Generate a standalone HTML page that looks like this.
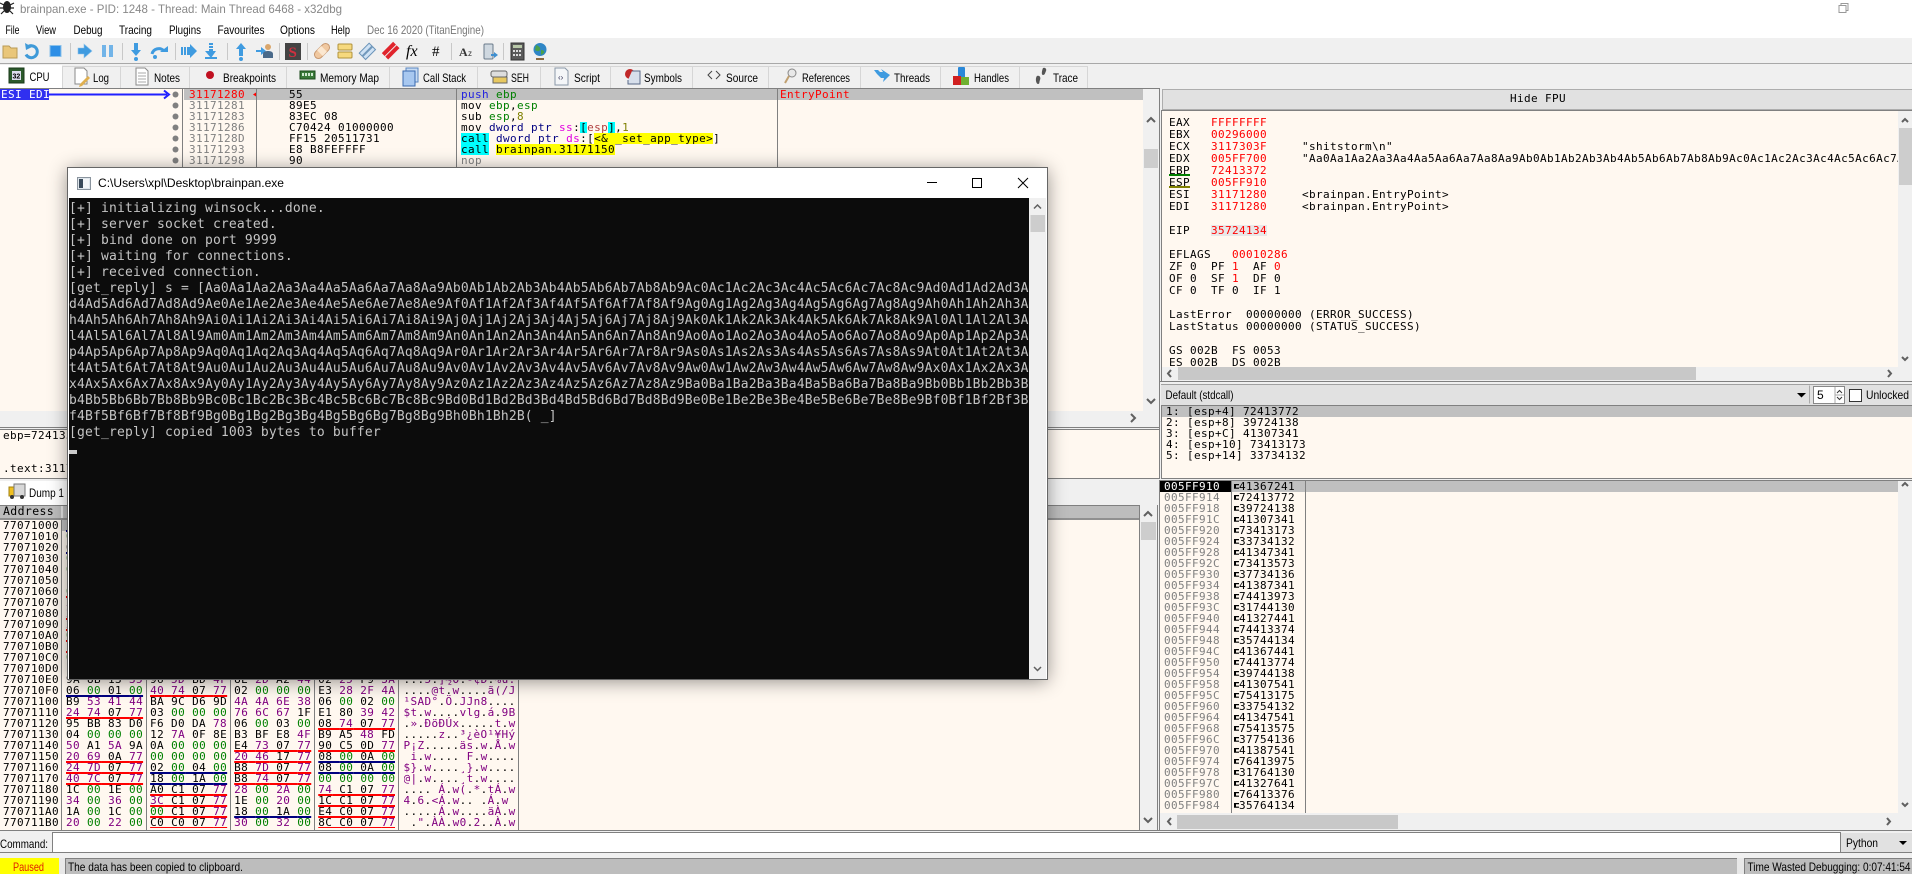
<!DOCTYPE html>
<html><head><meta charset="utf-8"><title>x32dbg</title>
<style>
html,body{margin:0;padding:0;width:1912px;height:874px;overflow:hidden;background:#f0f0f0}
svg{position:absolute;left:0;top:0}
svg text{font-family:"Liberation Sans",sans-serif;font-size:12px;fill:#000}
.m{position:absolute;white-space:pre;font-family:"DejaVu Sans Mono","Liberation Mono",monospace;font-size:11px;letter-spacing:.378px;line-height:11px;color:#000;overflow:hidden}
.m b{font-weight:normal;color:#008000}
.m i{font-style:normal;color:#800080}
.m u{text-decoration-thickness:2px;text-underline-offset:1px;text-decoration-skip-ink:none;text-decoration-line:underline}
.m u.n{text-decoration-color:#000080}
.m u.r{text-decoration-color:#f00}
.h{display:inline-block;height:11px}
.cy{background:#0ff}.ye{background:#ff0}
.gr{color:#008000}.nv{color:#000080}.mg{color:#e000e0}
#con{position:absolute;left:68px;top:168px;width:979px;height:511px;background:#fff;box-shadow:0 2px 18px rgba(0,0,0,.45);outline:1px solid #666;overflow:hidden}
#con pre{position:absolute;left:1px;top:30px;width:960px;height:478px;padding-top:3px;margin:0;background:#0c0c0c;color:#c4c4c4;font-family:"DejaVu Sans Mono","Liberation Mono",monospace;font-size:13px;letter-spacing:.17px;line-height:16px;white-space:pre;overflow:hidden}
</style></head><body>
<svg width="1912" height="874" viewBox="0 0 1912 874">
<rect width="1912" height="38" fill="#fff"/>
<rect y="38" width="1912" height="50" fill="#f0f0f0"/>
<rect y="63" width="1912" height="1" fill="#a8a8a8"/>
<!-- bug -->
<g fill="#222"><ellipse cx="7" cy="7" rx="4" ry="6"/><path d="M0 3l4 2M0 8h4M1 14l3-3M14 3l-4 2M14 8h-4M13 14l-3-3" stroke="#222" stroke-width="1.2"/></g>
<text x="20" y="13" style="fill:#888" textLength="322" lengthAdjust="spacingAndGlyphs">brainpan.exe - PID: 1248 - Thread: Main Thread 6468 - x32dbg</text>
<g stroke="#999" fill="none"><rect x="1841" y="3.500" width="7" height="7" fill="#fff"/><rect x="1839" y="5.500" width="7" height="7" fill="#fff"/></g>
<!-- menu -->
<text x="5.500" y="34" textLength="14" lengthAdjust="spacingAndGlyphs">File</text>
<text x="36" y="34" textLength="20" lengthAdjust="spacingAndGlyphs">View</text>
<text x="73.500" y="34" textLength="29" lengthAdjust="spacingAndGlyphs">Debug</text>
<text x="119" y="34" textLength="33" lengthAdjust="spacingAndGlyphs">Tracing</text>
<text x="169" y="34" textLength="32" lengthAdjust="spacingAndGlyphs">Plugins</text>
<text x="217.500" y="34" textLength="47" lengthAdjust="spacingAndGlyphs">Favourites</text>
<text x="280" y="34" textLength="35" lengthAdjust="spacingAndGlyphs">Options</text>
<text x="331" y="34" textLength="19" lengthAdjust="spacingAndGlyphs">Help</text>
<text x="367" y="34" style="fill:#777" textLength="117" lengthAdjust="spacingAndGlyphs">Dec 16 2020 (TitanEngine)</text>
<!-- toolbar separators -->
<g fill="#c8c8c8"><rect x="70" y="43" width="1" height="17"/><rect x="122" y="43" width="1" height="17"/><rect x="175" y="43" width="1" height="17"/><rect x="227" y="43" width="1" height="17"/><rect x="279" y="43" width="1" height="17"/><rect x="307" y="43" width="1" height="17"/><rect x="451" y="43" width="1" height="17"/><rect x="503" y="43" width="1" height="17"/></g>
<!-- toolbar icons -->
<path d="M3 46h6l2 2h6v10H3z" fill="#e9c679" stroke="#b99a55"/>
<path d="M27 47.500a6 6 0 1 1-1 7" fill="none" stroke="#3f9ad8" stroke-width="3"/><path d="M25 43l1 7 6-3z" fill="#3f9ad8"/>
<rect x="50" y="45.500" width="11" height="11" fill="#2e8fe6" stroke="#8cc2ea"/>
<path d="M78 48h6v-4l8 7-8 7v-4h-6z" fill="#3f9be0" stroke="#8cc2ea" stroke-width=".6"/>
<rect x="102" y="45" width="4" height="12" fill="#72b4e8"/><rect x="109" y="45" width="4" height="12" fill="#72b4e8"/>
<path d="M134 43h4v7h3l-5 6-5-6h3z" fill="#3f9be0"/><circle cx="136" cy="59" r="2" fill="#3f9be0"/>
<path d="M152 54a7 7 0 0 1 12-3" fill="none" stroke="#3f9be0" stroke-width="3"/><path d="M160 52h8v-6z" fill="#3f9be0"/><circle cx="155" cy="57" r="2" fill="#3f9be0"/>
<path d="M181 47h2v8h-2zM184 47h2v8h-2zM187 47h3v-3l7 7-7 7v-3h-3z" fill="#3f9be0"/>
<path d="M209 43h4v2h-4zM209 46h4v2h-4zM209 49h4v2h3l-5 7-6-7h4z" fill="#3f9be0"/><path d="M205 57h12v2h-12z" fill="#3f9be0"/>
<path d="M241 43l5 6h-3v7h-4v-7h-3z" fill="#3f9be0"/><circle cx="241" cy="59" r="2" fill="#3f9be0"/>
<path d="M256 50h5v-3l5 4-5 4v-3h-5z" fill="#3f9be0"/><circle cx="268" cy="47" r="3" fill="#d9a66c"/><path d="M263 58v-4c0-2 2-3 5-3s5 1 5 3v4z" fill="#4a6a8a"/>
<rect x="285" y="43" width="16" height="17" fill="#444"/><text x="288.500" y="57" style="fill:#d03040;font-weight:bold;font-family:'Liberation Serif',serif;font-size:15px">S</text>
<g transform="rotate(-45 322 51)"><rect x="313" y="47" width="18" height="8" rx="4" fill="#f0c8a0" stroke="#c89870"/><rect x="319" y="47" width="6" height="8" fill="#fbe7d0"/></g>
<rect x="338" y="44" width="14" height="6" rx="1" fill="#f6d97e" stroke="#b0923c"/><rect x="338" y="52" width="14" height="6" rx="1" fill="#f6d97e" stroke="#b0923c"/>
<g transform="rotate(-45 367 51)"><rect x="360" y="47" width="14" height="4" fill="#cfe2f4" stroke="#6a93b8"/><rect x="360" y="52" width="14" height="4" fill="#cfe2f4" stroke="#6a93b8"/></g>
<g transform="rotate(-45 391 51)"><rect x="383" y="46" width="16" height="4" fill="#e0242c"/><rect x="383" y="51" width="16" height="4" fill="#e0242c"/></g>
<text x="406" y="56" style="font-family:'Liberation Serif',serif;font-style:italic;font-size:16px">fx</text>
<text x="432" y="56" style="font-size:15px;font-family:'Liberation Serif',serif">#</text>
<text x="459" y="56" style="font-family:'Liberation Serif',serif;font-weight:bold;font-size:12px;fill:#333">A</text><text x="468" y="56" style="font-size:8px;fill:#333">z</text>
<rect x="484" y="44" width="9" height="15" rx="1" fill="#cfd8e0" stroke="#6a7a8a"/><path d="M491 54h3v-2l4 3-4 3v-2h-3z" fill="#3f8fd0"/>
<rect x="511" y="43" width="13" height="17" fill="#5a5a5a" stroke="#333"/><rect x="513" y="45" width="9" height="3" fill="#b8c8a8"/><g fill="#ddd"><rect x="513" y="50" width="2" height="2"/><rect x="516" y="50" width="2" height="2"/><rect x="519" y="50" width="2" height="2"/><rect x="513" y="54" width="2" height="2"/><rect x="516" y="54" width="2" height="2"/><rect x="519" y="54" width="2" height="2"/></g>
<circle cx="540" cy="49.500" r="6.500" fill="#2f86c6"/><path d="M536 45c3 1 5 3 4 5s-4 1-5 0zM541 50c2 0 4 1 3 3l-3 2z" fill="#4aa04a"/><path d="M536 58h8v2h-8z" fill="#8a6a40"/>
<!-- tabs -->
<g fill="#f0f0f0" stroke="#d6d6d6"><rect x="62.500" y="66.500" width="58" height="22"/><rect x="120.500" y="66.500" width="69" height="22"/><rect x="189.500" y="66.500" width="97" height="22"/><rect x="286.500" y="66.500" width="103" height="22"/><rect x="389.500" y="66.500" width="88" height="22"/><rect x="477.500" y="66.500" width="63" height="22"/><rect x="540.500" y="66.500" width="70" height="22"/><rect x="610.500" y="66.500" width="82" height="22"/><rect x="692.500" y="66.500" width="76" height="22"/><rect x="768.500" y="66.500" width="92" height="22"/><rect x="860.500" y="66.500" width="80" height="22"/><rect x="940.500" y="66.500" width="79" height="22"/><rect x="1019.500" y="66.500" width="68" height="22"/></g>
<rect x="0" y="65" width="62" height="24" fill="#fff"/>
<g>
<text x="29.500" y="81" textLength="20" lengthAdjust="spacingAndGlyphs">CPU</text>
<text x="93" y="82" textLength="16" lengthAdjust="spacingAndGlyphs">Log</text>
<text x="154" y="82" textLength="26" lengthAdjust="spacingAndGlyphs">Notes</text>
<text x="223" y="82" textLength="53" lengthAdjust="spacingAndGlyphs">Breakpoints</text>
<text x="320" y="82" textLength="59" lengthAdjust="spacingAndGlyphs">Memory Map</text>
<text x="423" y="82" textLength="43" lengthAdjust="spacingAndGlyphs">Call Stack</text>
<text x="511" y="82" textLength="18" lengthAdjust="spacingAndGlyphs">SEH</text>
<text x="574" y="82" textLength="26" lengthAdjust="spacingAndGlyphs">Script</text>
<text x="644" y="82" textLength="38" lengthAdjust="spacingAndGlyphs">Symbols</text>
<text x="726" y="82" textLength="32" lengthAdjust="spacingAndGlyphs">Source</text>
<text x="802" y="82" textLength="48" lengthAdjust="spacingAndGlyphs">References</text>
<text x="894" y="82" textLength="36" lengthAdjust="spacingAndGlyphs">Threads</text>
<text x="974" y="82" textLength="35" lengthAdjust="spacingAndGlyphs">Handles</text>
<text x="1053" y="82" textLength="25" lengthAdjust="spacingAndGlyphs">Trace</text>
</g>
<!-- tab icons -->
<rect x="9" y="68" width="15" height="15" fill="#2c5a2c" stroke="#1a3a1a"/><rect x="12" y="71" width="9" height="9" fill="#dde"/><text x="12.500" y="78.500" style="font-size:7px;font-weight:bold">32</text>
<path d="M75 68h9l3 3v13H75z" fill="#fff" stroke="#8a8a8a"/><path d="M80 84l8-8 2 2-8 8-3 1z" fill="#e0b050"/>
<path d="M136 68h9l3 3v14h-12z" fill="#fff" stroke="#8a8a8a"/><path d="M138 73h8M138 76h8M138 79h8M138 82h8" stroke="#aaa"/>
<circle cx="210" cy="75" r="4" fill="#c01020"/>
<rect x="300" y="71" width="15" height="8" fill="#3a7a3a" stroke="#1a4a1a"/><path d="M302 73h2v3h-2zM305 73h2v3h-2zM308 73h2v3h-2zM311 73h2v3h-2z" fill="#cfe8cf"/>
<rect x="406" y="68" width="12" height="14" fill="#c8dcf4" stroke="#5a86c0"/><rect x="403" y="71" width="12" height="15" fill="#a8c8f0" stroke="#3a6ab0"/>
<rect x="491" y="71" width="16" height="6" rx="2" fill="#ddd" stroke="#666"/><rect x="493" y="77" width="14" height="6" fill="#e8c860" stroke="#666"/>
<path d="M555 68h10l3 3v14h-13z" fill="#f4f6f8" stroke="#8a98a8"/><text x="558" y="80" style="font-size:8px;fill:#335">‹›</text>
<circle cx="630" cy="74" r="5" fill="#c02828"/><path d="M632 71h8v13h-12v-4" fill="#d8e0ec" stroke="#5a6a88"/>
<path d="M712 71l-4 4 4 4M716 71l4 4-4 4" fill="none" stroke="#444"/>
<circle cx="792" cy="73" r="4" fill="#e8e8e8" stroke="#888"/><path d="M789 76l-4 7" stroke="#c0a070" stroke-width="2"/>
<path d="M874 70h4l2 2h3l-2-3 9 6-7 7 1-4h-3l-4-4z" fill="#3f9be0"/>
<rect x="958" y="67" width="7" height="12" rx="1" fill="#2a88d8"/><rect x="953" y="76" width="8" height="9" fill="#d02020"/><rect x="961" y="77" width="8" height="8" fill="#70b030"/>
<path d="M1037 76c3-1 4 2 3 4s0 4-2 4-3-6-1-8zM1043 68c2-1 4 1 3 3s-1 4-3 4-1-5 0-7z" fill="#555"/>
<!-- panes background -->
<rect x="0" y="88" width="1160" height="1" fill="#808080"/>
<rect x="0" y="89" width="1143" height="322" fill="#fff8f0"/>
<rect x="184" y="89" width="959" height="11" fill="#c0c0c0"/>
<g fill="#808080"><rect x="182" y="89" width="1" height="322"/><rect x="256" y="89" width="1" height="322"/><rect x="456" y="89" width="1" height="322"/><rect x="777" y="89" width="1" height="322"/></g>
<g fill="#808080"><circle cx="175.500" cy="94.500" r="3"/><circle cx="175.500" cy="105.500" r="3"/><circle cx="175.500" cy="116.500" r="3"/><circle cx="175.500" cy="127.500" r="3"/><circle cx="175.500" cy="138.500" r="3"/><circle cx="175.500" cy="149.500" r="3"/><circle cx="175.500" cy="160.500" r="3"/></g>
<rect x="0" y="89" width="49" height="11" fill="#3030f0"/>
<path d="M49 94.500h118M164 90.500l5 4-5 4" fill="none" stroke="#2020ff" stroke-width="2"/>
<path d="M253 94.500l3-2v4z" fill="#f00"/>
<!-- disasm scrollbars -->
<rect x="1143" y="89" width="16" height="322" fill="#f0f0f0"/>
<rect x="1144" y="149" width="14" height="19" fill="#cdcdcd"/>
<path d="M1147 122l4-4 4 4M1147 399l4 4 4-4" fill="none" stroke="#606060" stroke-width="2"/>
<rect x="0" y="411" width="1159" height="16" fill="#f0f0f0"/>
<path d="M1131 414l4 4-4 4" fill="none" stroke="#606060" stroke-width="2"/>
<rect x="0" y="427" width="1160" height="1" fill="#808080"/>
<rect x="1159" y="88" width="1" height="343" fill="#808080"/>
<!-- info pane -->
<rect x="0" y="429" width="1159" height="1" fill="#808080"/>
<rect x="0" y="430" width="1159" height="48" fill="#fff8f0"/>
<rect x="1159" y="429" width="1" height="50" fill="#808080"/>
<rect x="0" y="478" width="1160" height="1" fill="#808080"/>
<rect x="0" y="479" width="1160" height="27" fill="#f0f0f0"/>
<rect x="0" y="481" width="68" height="25" fill="#fff"/>
<rect x="9" y="487" width="6" height="9" fill="#f0c020" stroke="#a08010"/><rect x="14" y="484" width="11" height="12" fill="#d8d8d8" stroke="#777"/><circle cx="12" cy="497" r="2" fill="#333"/><circle cx="22" cy="497" r="2" fill="#333"/>
<text x="29" y="497" textLength="35" lengthAdjust="spacingAndGlyphs">Dump 1</text>
<!-- dump -->
<rect x="0" y="505" width="1140" height="1" fill="#808080"/>
<rect x="0" y="506" width="1139" height="14" fill="#bdbdbd"/>
<rect x="61" y="506" width="2" height="13" fill="#e4e4e4"/>
<rect x="0" y="518" width="1139" height="2" fill="#909090"/>
<rect x="0" y="520" width="1139" height="310" fill="#fff8f0"/>
<rect x="62" y="520" width="337" height="11" fill="#c0c0c0"/>
<g fill="#808080"><rect x="61" y="520" width="1" height="310"/><rect x="146" y="520" width="1" height="310"/><rect x="230" y="520" width="1" height="310"/><rect x="314" y="520" width="1" height="310"/><rect x="398" y="520" width="1" height="310"/><rect x="518" y="520" width="1" height="310"/></g>
<rect x="1139" y="506" width="18" height="324" fill="#f0f0f0"/>
<rect x="1141" y="522" width="15" height="18" fill="#cdcdcd"/>
<path d="M1144 516l4-4 4 4M1144 818l4 4 4-4" fill="none" stroke="#606060" stroke-width="2"/>
<rect x="1139" y="505" width="1" height="325" fill="#808080"/><rect x="1157" y="505" width="1" height="325" fill="#808080"/>
<!-- registers -->
<rect x="1162.500" y="89.500" width="750" height="20" fill="#e1e1e1" stroke="#adadad"/>
<rect x="1161" y="110" width="751" height="1" fill="#808080"/>
<rect x="1161" y="110" width="1" height="272" fill="#808080"/>
<rect x="1162" y="111" width="736" height="256" fill="#fff8f0"/>
<rect x="1898" y="111" width="14" height="256" fill="#f0f0f0"/>
<rect x="1899" y="128" width="13" height="57" fill="#cdcdcd"/>
<path d="M1902 122l3-3 3 3M1902 357l3 3 3-3" fill="none" stroke="#606060" stroke-width="2"/>
<rect x="1162" y="367" width="750" height="13" fill="#f0f0f0"/>
<rect x="1178" y="367" width="518" height="13" fill="#c8c8c8"/>
<path d="M1171 370l-3 3.500 3 3.500M1888 370l3 3.500-3 3.500" fill="none" stroke="#606060" stroke-width="2"/>
<rect x="1160" y="381" width="752" height="1" fill="#808080"/>
<rect x="1211" y="225" width="56" height="11" fill="#e8e8e8"/>
<rect x="1169" y="174" width="21" height="2" fill="#008000"/>
<rect x="1169" y="186" width="21" height="2" fill="#808000"/>
<!-- call convention -->
<rect x="1161" y="384" width="751" height="21" fill="#e1e1e1"/>
<rect x="1161" y="384" width="751" height="1" fill="#a0a0a0"/>
<rect x="1162" y="405" width="750" height="1" fill="#808080"/>
<text x="1165.500" y="399" textLength="68" lengthAdjust="spacingAndGlyphs">Default (stdcall)</text>
<path d="M1797 393h9l-4.500 4.500z" fill="#000"/>
<rect x="1809" y="385.500" width="1" height="18" fill="#aaa"/>
<rect x="1813.500" y="386.500" width="31" height="17" fill="#fff" stroke="#888"/>
<text x="1817" y="399">5</text>
<path d="M1835 387v16M1835 395h9" stroke="#aaa"/>
<path d="M1837 393l2.500-2.500 2.500 2.500M1837 397l2.500 2.500 2.500-2.500" fill="none" stroke="#333"/>
<rect x="1849.500" y="389.500" width="12" height="12" fill="#fff" stroke="#333"/>
<text x="1866" y="399" textLength="43" lengthAdjust="spacingAndGlyphs">Unlocked</text>
<rect x="1162" y="406" width="750" height="72" fill="#fff8f0"/>
<rect x="1162" y="406" width="750" height="11" fill="#c0c0c0"/>
<rect x="1161" y="405" width="1" height="74" fill="#808080"/>
<rect x="1161" y="478" width="751" height="1" fill="#808080"/>
<!-- stack -->
<rect x="1159" y="480" width="753" height="1" fill="#808080"/>
<rect x="1160" y="481" width="738" height="332" fill="#fff8f0"/>
<rect x="1232" y="481" width="666" height="11" fill="#c0c0c0"/>
<rect x="1160" y="481" width="71" height="11" fill="#000"/>
<rect x="1231" y="481" width="1" height="332" fill="#808080"/>
<rect x="1305" y="481" width="1" height="332" fill="#808080"/>
<rect x="1159" y="480" width="1" height="350" fill="#808080"/>
<path id="k" d="M1234 484h5v1.200h-3v2.400h3v1.200h-5z" fill="#000"/>
<g fill="#000"><use href="#k" y="11"/><use href="#k" y="22"/><use href="#k" y="33"/><use href="#k" y="44"/><use href="#k" y="55"/><use href="#k" y="66"/><use href="#k" y="77"/><use href="#k" y="88"/><use href="#k" y="99"/><use href="#k" y="110"/><use href="#k" y="121"/><use href="#k" y="132"/><use href="#k" y="143"/><use href="#k" y="154"/><use href="#k" y="165"/><use href="#k" y="176"/><use href="#k" y="187"/><use href="#k" y="198"/><use href="#k" y="209"/><use href="#k" y="220"/><use href="#k" y="231"/><use href="#k" y="242"/><use href="#k" y="253"/><use href="#k" y="264"/><use href="#k" y="275"/><use href="#k" y="286"/><use href="#k" y="297"/><use href="#k" y="308"/><use href="#k" y="319"/></g>
<rect x="1898" y="481" width="14" height="332" fill="#f0f0f0"/>
<path d="M1902 486l3-3 3 3M1902 803l3 3 3-3" fill="none" stroke="#606060" stroke-width="2"/>
<rect x="1160" y="813" width="752" height="17" fill="#f0f0f0"/>
<rect x="1177" y="815" width="221" height="14" fill="#c8c8c8"/>
<path d="M1171 818l-3 3.500 3 3.500M1887 818l3 3.500-3 3.500" fill="none" stroke="#606060" stroke-width="2"/>
<!-- command -->
<rect x="0" y="830" width="1912" height="1" fill="#808080"/>
<text x="0" y="848" textLength="48" lengthAdjust="spacingAndGlyphs">Command:</text>
<rect x="52.500" y="832.500" width="1788" height="20" fill="#fff" stroke="#808080"/>
<rect x="1841" y="833" width="71" height="19" fill="#e1e1e1"/>
<text x="1846" y="847" textLength="32" lengthAdjust="spacingAndGlyphs">Python</text>
<path d="M1899 841h8l-4 4z" fill="#000"/>
<rect x="0" y="852" width="1912" height="1" fill="#808080"/>
<rect x="0" y="858" width="1912" height="1" fill="#808080"/>
<rect x="0" y="859" width="1912" height="15" fill="#bdbdbd"/>
<rect x="0" y="858" width="59" height="16" fill="#ff0"/>
<rect x="59" y="858" width="6" height="16" fill="#e8e8e8"/>
<rect x="65" y="858" width="1" height="16" fill="#808080"/>
<text x="13" y="871" style="fill:#e02000" textLength="31" lengthAdjust="spacingAndGlyphs">Paused</text>
<text x="68" y="871" textLength="175" lengthAdjust="spacingAndGlyphs">The data has been copied to clipboard.</text>
<rect x="1737" y="858" width="7" height="16" fill="#e8e8e8"/>
<rect x="1744" y="858" width="1" height="16" fill="#808080"/>
<text x="1747.500" y="871" textLength="163" lengthAdjust="spacingAndGlyphs">Time Wasted Debugging: 0:07:41:54</text>
</svg>

<!-- disassembly -->
<div class="m" style="left:1px;top:89px;color:#fff">ESI EDI</div>
<div class="m" style="left:189px;top:89px;color:#808080"><span style="color:#f00">31171280</span>
31171281
31171283
31171286
3117128D
31171293
31171298</div>
<div class="m" style="left:289px;top:89px">55
89E5
83EC 08
C70424 01000000
FF15 20511731
E8 B8FEFFFF
90</div>
<div class="m" style="left:461px;top:89px"><span style="color:#2020e0">push</span> <span class="gr">ebp</span>
mov <span class="gr">ebp</span>,<span class="gr">esp</span>
sub <span class="gr">esp</span>,<span style="color:#808000">8</span>
mov <span class="nv">dword ptr</span> <span class="mg">ss</span>:<span class="h cy">[</span><span style="color:#b04040">esp</span><span class="h cy">]</span>,<span style="color:#808000">1</span>
<span class="h cy">call</span> <span class="nv">dword ptr</span> <span class="mg">ds</span>:[<span class="h ye">&lt;&amp;__set_app_type&gt;</span>]
<span class="h cy">call</span> <span class="h ye">brainpan.31171150</span>
<span style="color:#808080">nop</span></div>
<div class="m" style="left:780px;top:89px;color:#f00">EntryPoint</div>
<!-- info -->
<div class="m" style="left:3px;top:430px">ebp=72413372</div>
<div class="m" style="left:3px;top:463px">.text:31171280 brainpan.exe:$1280 #680 &lt;EntryPoint&gt;</div>
<!-- dump text -->
<div class="m" style="left:3px;top:506px;font-size:11.500px">Address</div>
<div class="m" style="left:3px;top:520px">77071000
77071010
77071020
77071030
77071040
77071050
77071060
77071070
77071080
77071090
770710A0
770710B0
770710C0
770710D0
770710E0
770710F0
77071100
77071110
77071120
77071130
77071140
77071150
77071160
77071170
77071180
77071190
770711A0
770711B0</div>
<div class="m" style="left:66px;top:520px"><u class="n">1C</u>
<b>00</b>
<u class="n">08</u>
<b>00</b>
<b>00</b>
10
<u class="r"><b>00</b></u>
<i>20</i>
<u class="r"><i>24</i></u>
<u class="r"><i>24</i></u>
<u class="r"><b>00</b></u>
<u class="r">E4</u>
<b>00</b>
E8
9A 8B 13 <i>35</i> 96 <i>5D</i> BD <i>4F</i> 8E <i>2D</i> A2 <i>44</i> 02 <i>25</i> F9 <i>3A</i>
<u class="n">06 <b>00</b> 01 <b>00</b></u> <u class="r"><i>40</i> <i>74</i> 07 <i>77</i></u> 02 <b>00</b> <b>00</b> <b>00</b> E3 <i>28</i> <i>2F</i> <i>4A</i>
B9 <i>53</i> <i>41</i> <i>44</i> BA 9C D6 9D <i>4A</i> <i>4A</i> <i>6E</i> <i>38</i> 06 <b>00</b> 02 <b>00</b>
<u class="r"><i>24</i> <i>74</i> 07 <i>77</i></u> 03 <b>00</b> <b>00</b> <b>00</b> <i>76</i> <i>6C</i> <i>67</i> 1F E1 80 <i>39</i> <i>42</i>
95 BB 83 D0 F6 D0 DA <i>78</i> 06 <b>00</b> 03 <b>00</b> <u class="r">08 <i>74</i> 07 <i>77</i></u>
04 <b>00</b> <b>00</b> <b>00</b> 12 <i>7A</i> 0F 8E B3 BF E8 <i>4F</i> B9 A5 <i>48</i> FD
<i>50</i> A1 <i>5A</i> 9A 0A <b>00</b> <b>00</b> <b>00</b> <u class="r">E4 <i>73</i> 07 <i>77</i></u> <u class="r">90 C5 0D <i>77</i></u>
<u class="r"><i>20</i> <i>69</i> 0A <i>77</i></u> <b>00</b> <b>00</b> <b>00</b> <b>00</b> <u class="r"><i>20</i> <i>46</i> 17 <i>77</i></u> <u class="n">08 <b>00</b> 0A <b>00</b></u>
<u class="r"><i>24</i> <i>7D</i> 07 <i>77</i></u> <u class="n">02 <b>00</b> 04 <b>00</b></u> <u class="r">B8 <i>7D</i> 07 <i>77</i></u> <u class="n">08 <b>00</b> 0A <b>00</b></u>
<u class="r"><i>40</i> <i>7C</i> 07 <i>77</i></u> <u class="n">18 <b>00</b> 1A <b>00</b></u> <u class="r">B8 <i>74</i> 07 <i>77</i></u> <b>00</b> <b>00</b> <b>00</b> <b>00</b>
1C <b>00</b> 1E <b>00</b> <u class="r">A0 C1 07 <i>77</i></u> <i>28</i> <b>00</b> <i>2A</i> <b>00</b> <u class="r"><i>74</i> C1 07 <i>77</i></u>
<i>34</i> <b>00</b> <i>36</i> <b>00</b> <u class="r"><i>3C</i> C1 07 <i>77</i></u> 1E <b>00</b> <i>20</i> <b>00</b> <u class="r">1C C1 07 <i>77</i></u>
1A <b>00</b> 1C <b>00</b> <u class="r"><b>00</b> C1 07 <i>77</i></u> <u class="n">18 <b>00</b> 1A <b>00</b></u> <u class="r">E4 C0 07 <i>77</i></u>
<i>20</i> <b>00</b> <i>22</i> <b>00</b> <u class="r">C0 C0 07 <i>77</i></u> <i>30</i> <b>00</b> <i>32</i> <b>00</b> <u class="r">8C C0 07 <i>77</i></u></div>
<div class="m" style="left:403.500px;top:674px">...<i>5</i>.<i>]½O</i>.<i>-¢D</i>.<i>%ù:</i>
....<i>@t</i>.<i>w</i>....<i>ã(/J</i>
<i>¹SAD°</i>.<i>Ö</i>.<i>JJn8</i>....
<i>$t</i>.<i>w</i>....<i>vlg</i>.<i>á</i>.<i>9B</i>
.<i>»</i>.<i>ÐöÐÚx</i>.....<i>t</i>.<i>w</i>
.....<i>z</i>..<i>³¿èO¹¥Hý</i>
<i>P¡Z</i>.....<i>äs</i>.<i>w</i>.<i>Å</i>.<i>w</i>
<i> i</i>.<i>w</i>....<i> F</i>.<i>w</i>....
<i>$}</i>.<i>w</i>....<i>¸}</i>.<i>w</i>....
<i>@|</i>.<i>w</i>....<i>¸t</i>.<i>w</i>....
.... <i>Á</i>.<i>w(</i>.<i>*</i>.<i>tÁ</i>.<i>w</i>
<i>4</i>.<i>6</i>.<i>&lt;Á</i>.<i>w</i>.. .<i>Á</i>.<i>w</i>
.....<i>Á</i>.<i>w</i>....<i>äÀ</i>.<i>w</i>
 .<i>"</i>.<i>ÀÀ</i>.<i>w0</i>.<i>2</i>..<i>À</i>.<i>w</i></div>
<!-- registers text -->
<div class="m" style="left:1169px;top:117px;width:729px;height:250px;line-height:12px">EAX   <span style="color:#f00">FFFFFFFF</span>
EBX   <span style="color:#f00">00296000</span>
ECX   <span style="color:#f00">3117303F</span>     "shitstorm\n"
EDX   <span style="color:#f00">005FF700</span>     "Aa0Aa1Aa2Aa3Aa4Aa5Aa6Aa7Aa8Aa9Ab0Ab1Ab2Ab3Ab4Ab5Ab6Ab7Ab8Ab9Ac0Ac1Ac2Ac3Ac4Ac5Ac6Ac7Ac8Ac9"
EBP   <span style="color:#f00">72413372</span>
ESP   <span style="color:#f00">005FF910</span>
ESI   <span style="color:#f00">31171280</span>     &lt;brainpan.EntryPoint&gt;
EDI   <span style="color:#f00">31171280</span>     &lt;brainpan.EntryPoint&gt;

EIP   <span style="color:#f00">35724134</span>

EFLAGS   <span style="color:#f00">00010286</span>
ZF 0  PF <span style="color:#f00">1</span>  AF <span style="color:#f00">0</span>
OF 0  SF <span style="color:#f00">1</span>  DF 0
CF 0  TF 0  IF 1

LastError  00000000 (ERROR_SUCCESS)
LastStatus 00000000 (STATUS_SUCCESS)

GS 002B  FS 0053
ES 002B  DS 002B</div>
<div class="m" style="left:1510px;top:93px">Hide FPU</div>
<!-- call args -->
<div class="m" style="left:1166px;top:406px">1: [esp+4] 72413772
2: [esp+8] 39724138
3: [esp+C] 41307341
4: [esp+10] 73413173
5: [esp+14] 33734132</div>
<!-- stack -->
<div class="m" style="left:1164px;top:481px;color:#808080"><span style="color:#fff">005FF910</span>
005FF914
005FF918
005FF91C
005FF920
005FF924
005FF928
005FF92C
005FF930
005FF934
005FF938
005FF93C
005FF940
005FF944
005FF948
005FF94C
005FF950
005FF954
005FF958
005FF95C
005FF960
005FF964
005FF968
005FF96C
005FF970
005FF974
005FF978
005FF97C
005FF980
005FF984</div>
<div class="m" style="left:1239px;top:481px">41367241
72413772
39724138
41307341
73413173
33734132
41347341
73413573
37734136
41387341
74413973
31744130
41327441
74413374
35744134
41367441
74413774
39744138
41307541
75413175
33754132
41347541
75413575
37754136
41387541
76413975
31764130
41327641
76413376
35764134</div>
<!-- console -->
<div id="con"><pre>[+] initializing winsock...done.
[+] server socket created.
[+] bind done on port 9999
[+] waiting for connections.
[+] received connection.
[get_reply] s = [Aa0Aa1Aa2Aa3Aa4Aa5Aa6Aa7Aa8Aa9Ab0Ab1Ab2Ab3Ab4Ab5Ab6Ab7Ab8Ab9Ac0Ac1Ac2Ac3Ac4Ac5Ac6Ac7Ac8Ac9Ad0Ad1Ad2Ad3A
d4Ad5Ad6Ad7Ad8Ad9Ae0Ae1Ae2Ae3Ae4Ae5Ae6Ae7Ae8Ae9Af0Af1Af2Af3Af4Af5Af6Af7Af8Af9Ag0Ag1Ag2Ag3Ag4Ag5Ag6Ag7Ag8Ag9Ah0Ah1Ah2Ah3A
h4Ah5Ah6Ah7Ah8Ah9Ai0Ai1Ai2Ai3Ai4Ai5Ai6Ai7Ai8Ai9Aj0Aj1Aj2Aj3Aj4Aj5Aj6Aj7Aj8Aj9Ak0Ak1Ak2Ak3Ak4Ak5Ak6Ak7Ak8Ak9Al0Al1Al2Al3A
l4Al5Al6Al7Al8Al9Am0Am1Am2Am3Am4Am5Am6Am7Am8Am9An0An1An2An3An4An5An6An7An8An9Ao0Ao1Ao2Ao3Ao4Ao5Ao6Ao7Ao8Ao9Ap0Ap1Ap2Ap3A
p4Ap5Ap6Ap7Ap8Ap9Aq0Aq1Aq2Aq3Aq4Aq5Aq6Aq7Aq8Aq9Ar0Ar1Ar2Ar3Ar4Ar5Ar6Ar7Ar8Ar9As0As1As2As3As4As5As6As7As8As9At0At1At2At3A
t4At5At6At7At8At9Au0Au1Au2Au3Au4Au5Au6Au7Au8Au9Av0Av1Av2Av3Av4Av5Av6Av7Av8Av9Aw0Aw1Aw2Aw3Aw4Aw5Aw6Aw7Aw8Aw9Ax0Ax1Ax2Ax3A
x4Ax5Ax6Ax7Ax8Ax9Ay0Ay1Ay2Ay3Ay4Ay5Ay6Ay7Ay8Ay9Az0Az1Az2Az3Az4Az5Az6Az7Az8Az9Ba0Ba1Ba2Ba3Ba4Ba5Ba6Ba7Ba8Ba9Bb0Bb1Bb2Bb3B
b4Bb5Bb6Bb7Bb8Bb9Bc0Bc1Bc2Bc3Bc4Bc5Bc6Bc7Bc8Bc9Bd0Bd1Bd2Bd3Bd4Bd5Bd6Bd7Bd8Bd9Be0Be1Be2Be3Be4Be5Be6Be7Be8Be9Bf0Bf1Bf2Bf3B
f4Bf5Bf6Bf7Bf8Bf9Bg0Bg1Bg2Bg3Bg4Bg5Bg6Bg7Bg8Bg9Bh0Bh1Bh2B( _]
[get_reply] copied 1003 bytes to buffer</pre></div>
<svg width="1912" height="874" viewBox="0 0 1912 874" style="pointer-events:none">
<rect x="69" y="450" width="8" height="4" fill="#ccc"/>
<rect x="77.500" y="177.500" width="13" height="12" fill="#dfe6ec" stroke="#8a949e"/><rect x="79" y="179" width="4" height="9" fill="#3a4a5a"/><rect x="83" y="179" width="6" height="9" fill="#f4f6f8"/>
<text x="98" y="187" textLength="186" lengthAdjust="spacingAndGlyphs">C:\Users\xpl\Desktop\brainpan.exe</text>
<path d="M927 182.500h10" stroke="#000" fill="none"/>
<rect x="972.500" y="178.500" width="9" height="9" fill="none" stroke="#000"/>
<path d="M1018 178l10 10M1028 178l-10 10" stroke="#000" fill="none"/>
<rect x="1029" y="198" width="17" height="481" fill="#f0f0f0"/>
<rect x="1030.500" y="215" width="14.500" height="17" fill="#cdcdcd"/>
<path d="M1034 208.500l3.500-3.500 3.500 3.500M1034 667l3.500 3.500 3.500-3.500" fill="none" stroke="#606060" stroke-width="1.500"/>
</svg>
</body></html>
